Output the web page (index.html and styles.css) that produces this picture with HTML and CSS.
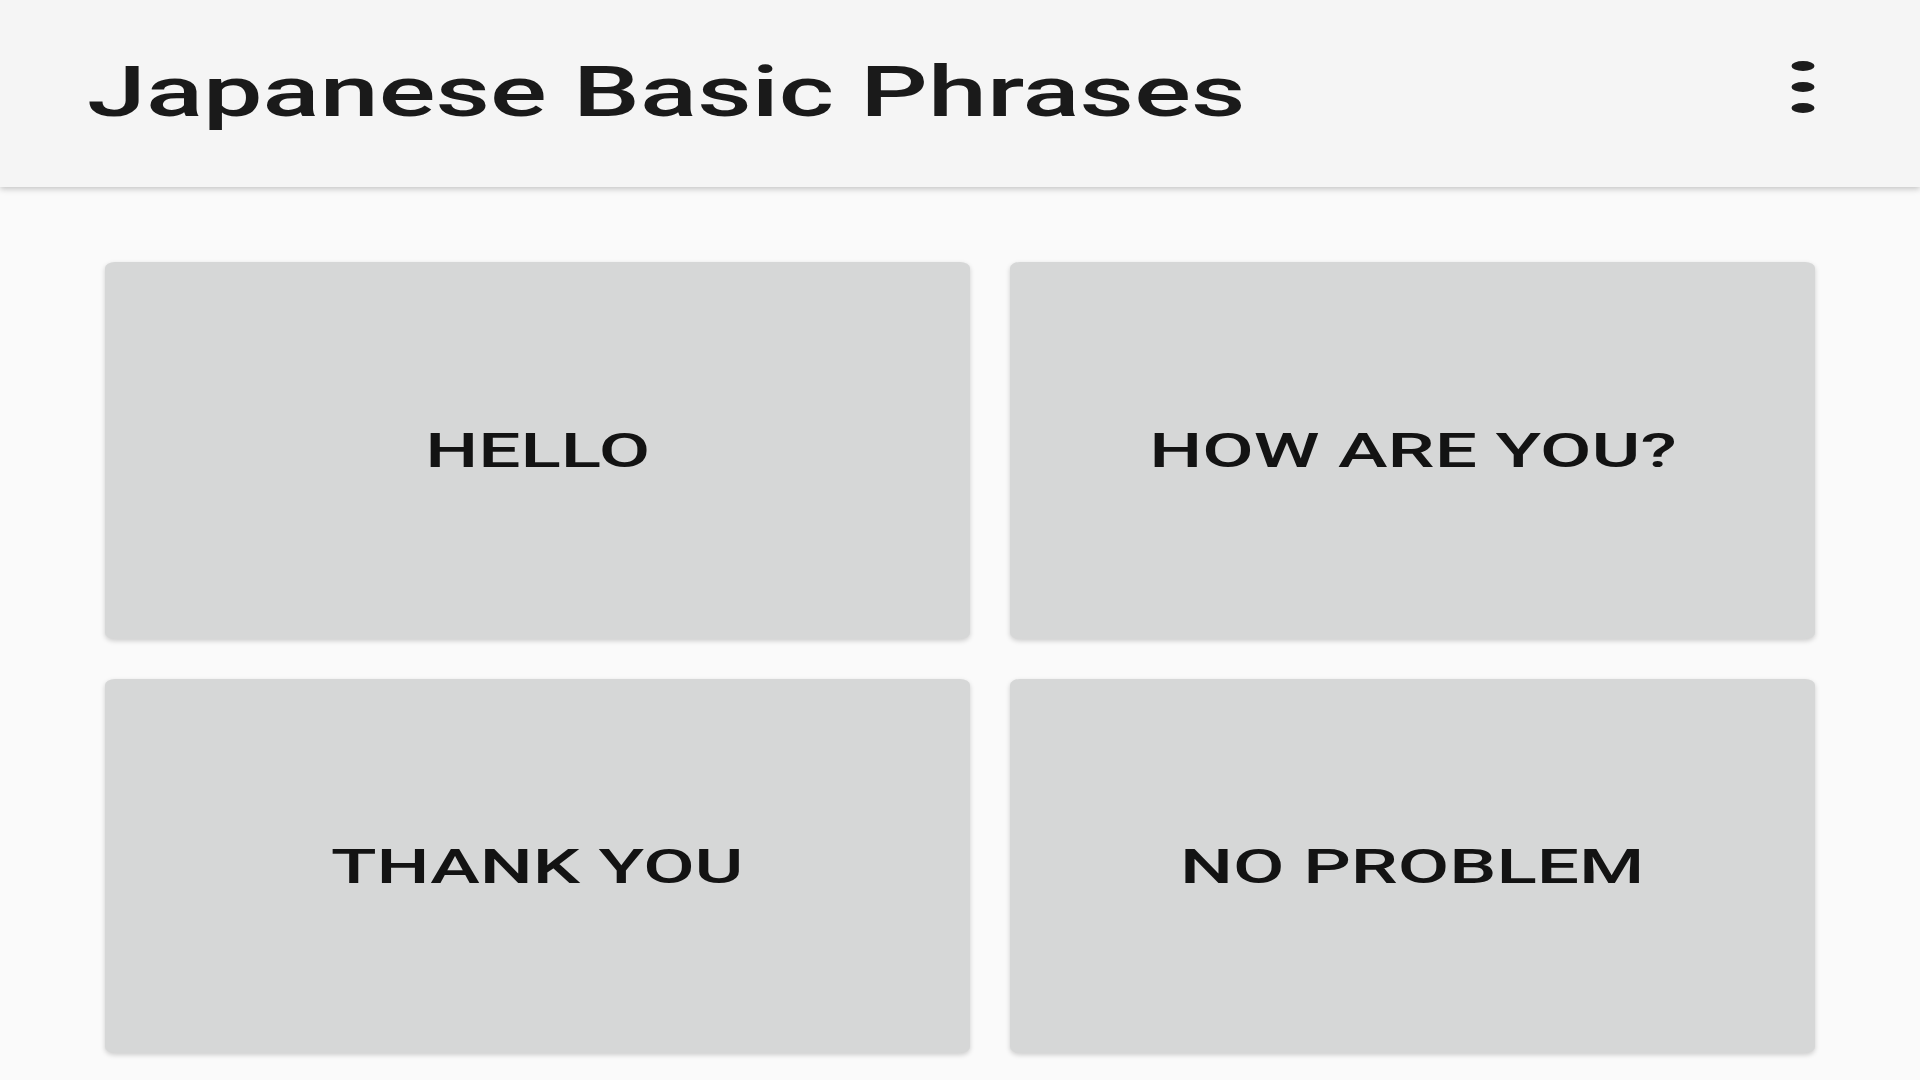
FILE: index.html
```html
<!DOCTYPE html>
<html lang="en">
<head>
<meta charset="utf-8">
<title>Japanese Basic Phrases</title>
<link rel="stylesheet" href="styles.css">
</head>
<body>
<header class="appbar">
  <h1 class="title"><span class="stretch">Japanese Basic Phrases</span></h1>
  <button class="menu" aria-label="More options">
    <svg width="40" height="70" viewBox="0 0 40 70">
      <ellipse cx="20" cy="14" rx="11.5" ry="5" fill="#1c1c1c"/>
      <ellipse cx="20" cy="35" rx="11.5" ry="5" fill="#1c1c1c"/>
      <ellipse cx="20" cy="56" rx="11.5" ry="5" fill="#1c1c1c"/>
    </svg>
  </button>
</header>
<main class="grid">
  <div class="card"><span class="label">HELLO</span></div>
  <div class="card"><span class="label">HOW ARE YOU?</span></div>
  <div class="card"><span class="label">THANK YOU</span></div>
  <div class="card"><span class="label">NO PROBLEM</span></div>
</main>
</body>
</html>
```
FILE: styles.css
```css
html, body {
  margin: 0;
  padding: 0;
}
body {
  background: #fafafa;
  font-family: Roboto, "Liberation Sans", sans-serif;
  width: 1920px;
  height: 1080px;
  overflow: hidden;
}
.appbar {
  height: 187px;
  background: #f5f5f5;
  box-shadow: 0 2px 6px rgba(0, 0, 0, 0.22);
  display: flex;
  align-items: center;
  justify-content: space-between;
  padding: 0 97px 0 87px;
  box-sizing: border-box;
  position: relative;
  z-index: 1;
}
.title {
  margin: 0;
  font-size: 70px;
  font-weight: 500;
  color: #1a1a1a;
  line-height: 1;
  margin-top: -4px;
}
.stretch {
  display: inline-block;
  transform-origin: left center;
  transform: scaleX(1.514);
}
.menu {
  border: 0;
  background: none;
  padding: 0;
  width: 40px;
  height: 70px;
  margin-top: -13px;
}
.menu svg { display: block; }
.grid {
  display: grid;
  grid-template-columns: 865px 805px;
  grid-template-rows: 377px 374px;
  gap: 40px;
  padding: 75px 0 0 105px;
}
.card {
  background: #d6d7d7;
  border-radius: 10px / 6px;
  box-shadow: 0 2px 5px rgba(0, 0, 0, 0.18);
  display: flex;
  align-items: center;
  justify-content: center;
}
.label {
  display: inline-block;
  font-size: 49px;
  font-weight: 500;
  color: #131313;
  letter-spacing: 0;
  transform: scaleX(1.525);
}
```
